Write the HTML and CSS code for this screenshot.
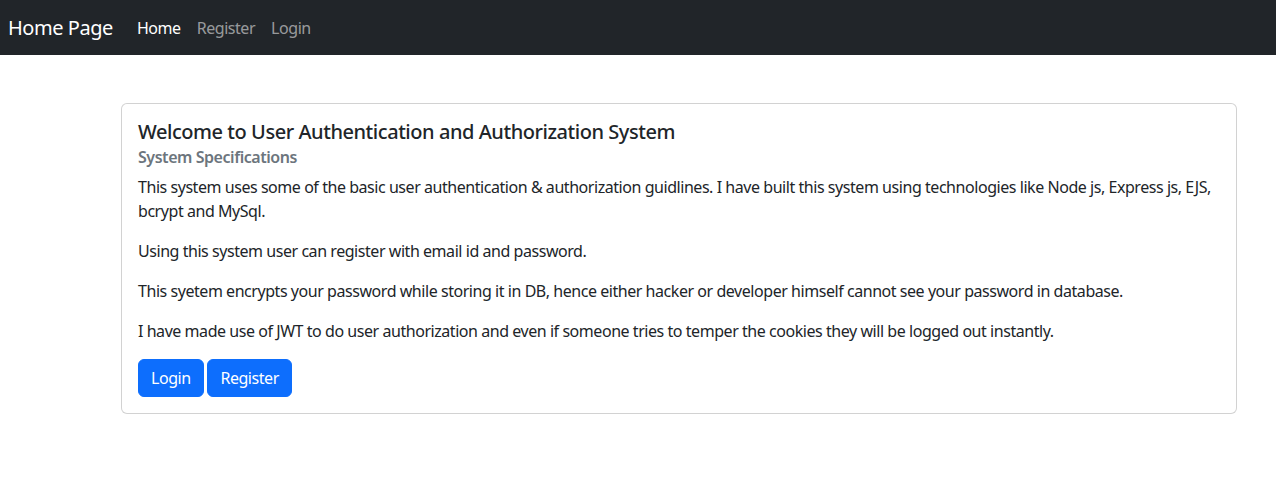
FILE: index.html
```html
<!DOCTYPE html>
<html lang="en">
<head>
  <meta charset="UTF-8">
  <title>Home Page</title>
  <link rel="stylesheet" href="styles.css">
</head>
<body>
  <nav class="navbar">
    <a class="navbar-brand" href="#">Home Page</a>
    <ul class="navbar-nav">
      <li><a class="nav-link active" href="#">Home</a></li>
      <li><a class="nav-link" href="#">Register</a></li>
      <li><a class="nav-link" href="#">Login</a></li>
    </ul>
  </nav>

  <div class="card">
    <div class="card-body">
      <h5 class="card-title">Welcome to User Authentication and Authorization System</h5>
      <h6 class="card-subtitle">System Specifications</h6>
      <p>This system uses some of the basic user authentication &amp; authorization guidlines. I have built this system using technologies like Node js, Express js, EJS, bcrypt and MySql.</p>
      <p>Using this system user can register with email id and password.</p>
      <p>This syetem encrypts your password while storing it in DB, hence either hacker or developer himself cannot see your password in database.</p>
      <p>I have made use of JWT to do user authorization and even if someone tries to temper the cookies they will be logged out instantly.</p>
      <a href="#" class="btn">Login</a>
      <a href="#" class="btn">Register</a>
    </div>
  </div>
</body>
</html>
```

FILE: styles.css
```css
* {
  box-sizing: border-box;
}

body {
  font-family: 'Noto Sans', sans-serif;
  font-size: 16px;
  line-height: 1.5;
  letter-spacing: -0.45px;
  margin: 0;
  padding: 0;
  background-color: #fff;
  color: #212529;
}

a {
  text-decoration: none;
}

.navbar {
  background-color: #212529;
  height: 55px;
  display: flex;
  align-items: center;
  padding: 0 8px;
}

.navbar-brand {
  color: #fff;
  font-size: 20px;
  line-height: 30px;
  margin-right: 16px;
}

.navbar-nav {
  display: flex;
  list-style: none;
  margin: 0;
  padding: 0;
}

.nav-link {
  display: block;
  padding: 8px;
  color: rgba(255, 255, 255, 0.55);
}

.nav-link.active {
  color: #fff;
}

.card {
  margin: 48px 39px 0 121px;
  border: 1px solid rgba(0, 0, 0, 0.175);
  border-radius: 6px;
  background: #fff;
}

.card-body {
  padding: 16px;
}

.card-title {
  font-size: 20px;
  font-weight: 500;
  line-height: 1.2;
  margin: 0 0 8px;
}

.card-subtitle {
  font-size: 16px;
  font-weight: 600;
  line-height: 1.2;
  color: #6c757d;
  margin: -4px 0 8px;
}

p {
  margin: 0 0 16px;
}

.btn {
  display: inline-block;
  padding: 6px 12px;
  line-height: 24px;
  border: 1px solid #0d6efd;
  border-radius: 6px;
  background-color: #0d6efd;
  color: #fff;
}
```
